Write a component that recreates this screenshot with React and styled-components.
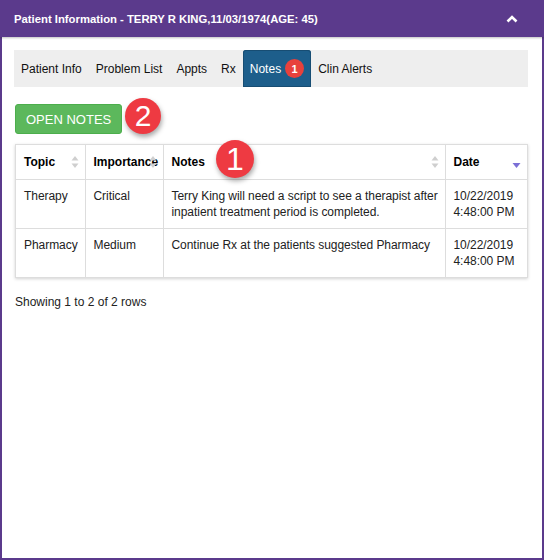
import React from "react"
import styled, { createGlobalStyle } from "styled-components"

const GlobalStyle = createGlobalStyle`
  html, body {
    margin: 0;
    padding: 0;
    background: #ffffff;
  }
  body {
    font-family: "Liberation Sans", Arial, sans-serif;
    font-size: 12px;
    color: #333;
  }
`

const Panel = styled.div`
  width: 544px;
  height: 560px;
  box-sizing: border-box;
  border: 2px solid #5b3a8c;
  border-top: none;
  display: flex;
  flex-direction: column;
  background: #fff;
`

const PanelHeader = styled.div`
  height: 37px;
  margin: 0 -2px;
  background: #5b3a8c;
  color: #fff;
  font-weight: bold;
  font-size: 11.3px;
  display: flex;
  align-items: center;
  justify-content: space-between;
  padding: 0 26px 0 14px;
  box-shadow: 0 1px 2px rgba(0, 0, 0, 0.25);
`

const PanelBody = styled.div`
  position: relative;
  padding: 13px 14px 0 12px;
`

const TabBar = styled.ul`
  list-style: none;
  margin: 0;
  padding: 0;
  height: 37px;
  background: #eeeeee;
  display: flex;
  align-items: stretch;
`

const Tab = styled.li`
  display: flex;
  align-items: center;
  padding: 0 7px;
  color: ${(p) => (p.$active ? "#fff" : "#111")};
  background: ${(p) => (p.$active ? "#1d5e8b" : "transparent")};
  border-radius: ${(p) => (p.$active ? "3px 3px 0 0" : "0")};
  box-shadow: ${(p) => (p.$active ? "inset 0 0 0 1px #174d73" : "none")};
  font-size: 12px;
`

const TabBadge = styled.span`
  display: inline-flex;
  align-items: center;
  justify-content: center;
  width: 19px;
  height: 19px;
  margin-left: 4px;
  border-radius: 50%;
  background: #e8413c;
  color: #fff;
  font-weight: bold;
  font-size: 11px;
`

const Toolbar = styled.div`
  display: flex;
  padding: 17px 0 10px 1px;
`

const GreenButton = styled.button`
  font-family: "Liberation Sans", Arial, sans-serif;
  font-size: 13px;
  color: #fff;
  background: #5cb85c;
  border: 1px solid #4cae4c;
  border-radius: 3px;
  height: 30px;
  padding: 0 10px;
  cursor: pointer;
`

const TableWrap = styled.div`
  margin-left: 1px;
  border: 1px solid #dddddd;
  box-shadow: 0 1px 3px rgba(0, 0, 0, 0.18);
`

const Table = styled.table`
  width: 100%;
  table-layout: fixed;
  border-collapse: collapse;
  font-size: 12px;
  line-height: 16px;
`

const Th = styled.th`
  position: relative;
  text-align: left;
  font-weight: bold;
  color: #000;
  padding: 9px 8px 9px;
  width: ${(p) => (p.$w ? `${p.$w}px` : "auto")};
  box-sizing: border-box;
  white-space: nowrap;
  border-left: ${(p) => (p.$first ? "none" : "1px solid #dddddd")};
  border-bottom: 1px solid #dddddd;
`

const Td = styled.td`
  vertical-align: top;
  padding: 8px 6px 8px 8px;
  color: #222;
  letter-spacing: -0.05px;
  border-left: ${(p) => (p.$first ? "none" : "1px solid #dddddd")};
  border-top: 1px solid #dddddd;
`

const SortIcon = styled.svg`
  position: absolute;
  right: 6px;
  top: 50%;
  transform: translateY(-50%);
`

const Footer = styled.div`
  margin: 17px 0 0 1px;
  color: #222;
  font-size: 12px;
`

const Marker = styled.div`
  position: absolute;
  left: ${(p) => p.$x}px;
  top: ${(p) => p.$y}px;
  width: ${(p) => p.$size}px;
  height: ${(p) => p.$size}px;
  border-radius: 50%;
  background: #ee3a42;
  color: #fff;
  font-family: "Liberation Sans", Arial, sans-serif;
  font-size: ${(p) => p.$font}px;
  display: flex;
  align-items: center;
  justify-content: center;
  box-shadow: 1px 3px 5px rgba(0, 0, 0, 0.35);
`

const Both = () => (
  <SortIcon width="8" height="14" viewBox="0 0 8 14">
    <path d="M4 1 L7.5 5.5 H0.5 Z" fill="#cfcfcf" />
    <path d="M4 13 L7.5 8.5 H0.5 Z" fill="#cfcfcf" />
  </SortIcon>
)

const Desc = () => (
  <SortIcon width="9" height="14" viewBox="0 0 9 14" style={{ top: "60%" }}>
    <path d="M0.5 5 H8.5 L4.5 10 Z" fill="#7b6fd6" />
  </SortIcon>
)

const rows = [
  {
    topic: "Therapy",
    importance: "Critical",
    notes: "Terry King will need a script to see a therapist after inpatient treatment period is completed.",
    date: ["10/22/2019", "4:48:00 PM"],
  },
  {
    topic: "Pharmacy",
    importance: "Medium",
    notes: "Continue Rx at the patients suggested Pharmacy",
    date: ["10/22/2019", "4:48:00 PM"],
  },
]

const tabs = ["Patient Info", "Problem List", "Appts", "Rx", "Notes", "Clin Alerts"]

export default function App() {
  return (
    <>
      <GlobalStyle />
      <Panel>
        <PanelHeader>
          <span>Patient Information - TERRY R KING,11/03/1974(AGE: 45)</span>
          <svg width="12" height="8" viewBox="0 0 12 8">
            <path d="M1.5 6.5 L6 2 L10.5 6.5" fill="none" stroke="#fff" strokeWidth="2.6" />
          </svg>
        </PanelHeader>
        <PanelBody>
          <TabBar>
            {tabs.map((t) => (
              <Tab key={t} $active={t === "Notes"}>
                {t}
                {t === "Notes" && <TabBadge>1</TabBadge>}
              </Tab>
            ))}
          </TabBar>
          <Toolbar>
            <GreenButton>OPEN NOTES</GreenButton>
          </Toolbar>
          <TableWrap>
            <Table>
              <thead>
                <tr>
                  <Th $first $w={69}>
                    Topic
                    <Both />
                  </Th>
                  <Th $w={78}>
                    Importance
                    <Both />
                  </Th>
                  <Th>
                    Notes
                    <Both />
                  </Th>
                  <Th $w={82}>
                    Date
                    <Desc />
                  </Th>
                </tr>
              </thead>
              <tbody>
                {rows.map((r) => (
                  <tr key={r.topic}>
                    <Td $first>{r.topic}</Td>
                    <Td>{r.importance}</Td>
                    <Td>{r.notes}</Td>
                    <Td>
                      {r.date[0]}
                      <br />
                      {r.date[1]}
                    </Td>
                  </tr>
                ))}
              </tbody>
            </Table>
          </TableWrap>
          <Footer>Showing 1 to 2 of 2 rows</Footer>
          <Marker $x={123} $y={61} $size={36} $font={30}>2</Marker>
          <Marker $x={214} $y={103} $size={38} $font={32}>1</Marker>
        </PanelBody>
      </Panel>
    </>
  )
}
